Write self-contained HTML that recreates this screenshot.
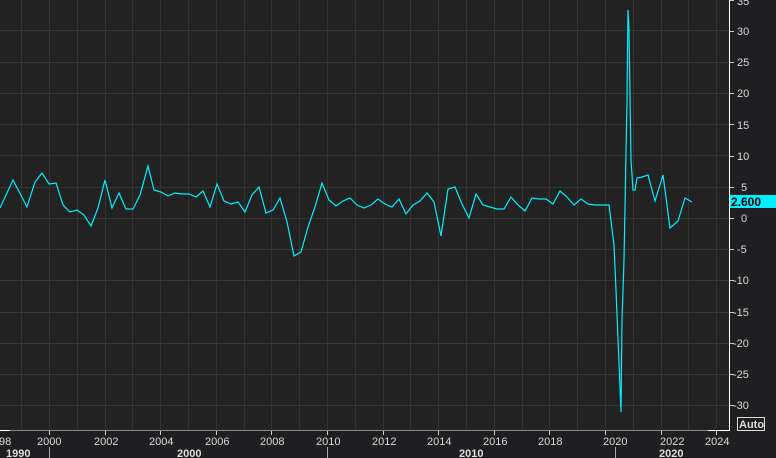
<!DOCTYPE html>
<html><head><meta charset="utf-8"><style>
html,body{margin:0;padding:0;background:#1f1f21;width:776px;height:458px;overflow:hidden}
svg{display:block}
text{font-family:"Liberation Sans",sans-serif;font-size:11px;fill:#d8d8d8}
</style></head><body>
<svg width="776" height="458" xmlns="http://www.w3.org/2000/svg">
<rect x="0" y="0" width="729" height="430" fill="#222222"/>
<g stroke="#343434" stroke-width="1">
<line x1="21.5" y1="0" x2="21.5" y2="430"/><line x1="49.5" y1="0" x2="49.5" y2="430"/><line x1="77.5" y1="0" x2="77.5" y2="430"/><line x1="105.5" y1="0" x2="105.5" y2="430"/><line x1="132.5" y1="0" x2="132.5" y2="430"/><line x1="160.5" y1="0" x2="160.5" y2="430"/><line x1="188.5" y1="0" x2="188.5" y2="430"/><line x1="216.5" y1="0" x2="216.5" y2="430"/><line x1="244.5" y1="0" x2="244.5" y2="430"/><line x1="271.5" y1="0" x2="271.5" y2="430"/><line x1="299.5" y1="0" x2="299.5" y2="430"/><line x1="327.5" y1="0" x2="327.5" y2="430"/><line x1="355.5" y1="0" x2="355.5" y2="430"/><line x1="383.5" y1="0" x2="383.5" y2="430"/><line x1="410.5" y1="0" x2="410.5" y2="430"/><line x1="438.5" y1="0" x2="438.5" y2="430"/><line x1="466.5" y1="0" x2="466.5" y2="430"/><line x1="494.5" y1="0" x2="494.5" y2="430"/><line x1="522.5" y1="0" x2="522.5" y2="430"/><line x1="549.5" y1="0" x2="549.5" y2="430"/><line x1="577.5" y1="0" x2="577.5" y2="430"/><line x1="605.5" y1="0" x2="605.5" y2="430"/><line x1="633.5" y1="0" x2="633.5" y2="430"/><line x1="661.5" y1="0" x2="661.5" y2="430"/><line x1="688.5" y1="0" x2="688.5" y2="430"/><line x1="716.5" y1="0" x2="716.5" y2="430"/>
<line x1="0" y1="30.5" x2="729" y2="30.5"/><line x1="0" y1="62.5" x2="729" y2="62.5"/><line x1="0" y1="93.5" x2="729" y2="93.5"/><line x1="0" y1="124.5" x2="729" y2="124.5"/><line x1="0" y1="155.5" x2="729" y2="155.5"/><line x1="0" y1="187.5" x2="729" y2="187.5"/><line x1="0" y1="218.5" x2="729" y2="218.5"/><line x1="0" y1="249.5" x2="729" y2="249.5"/><line x1="0" y1="280.5" x2="729" y2="280.5"/><line x1="0" y1="312.5" x2="729" y2="312.5"/><line x1="0" y1="343.5" x2="729" y2="343.5"/><line x1="0" y1="374.5" x2="729" y2="374.5"/><line x1="0" y1="405.5" x2="729" y2="405.5"/>
</g>
<polyline fill="none" stroke="#00f0ff" stroke-width="1.2" points="0,208 13,180 27,207 35,182 42,173 49,184 56,183 63,205 70,212 77,210 84,215 91,226 98,208 105,180 112,208 119,193 126,209 133,209 140,195 148,166 154,190 161,192 168,196 175,193 182,194 189,194 196,197 203,191 210,207 217,184 224,201 231,204 238,202 245,212 252,195 259,187 266,213 273,210 280,198 287,222 294,256 301,252 308,227 315,207 322,183 329,200 336,206 343,201 350,198 357,205 364,208 371,205 378,199 385,204 392,207 399,199 406,214 413,205 420,201 427,193 434,202 441,236 448,189 455,187 462,204 469,218 476,194 483,205 490,207 497,209 504,209 511,197 518,205 525,211 532,198 539,199 546,199 553,204 560,191 567,197 574,205 581,199 588,204 595,205 602,205 609,205 614,245 616,290 621,412 622,320 624,260 627,100 628,10 629,30 631,160 633,190 635,190 637,178 642,177 648,175 655,201 663,175 670,228 678,221 685,198 692,202"/>
<line x1="0" y1="430.5" x2="729" y2="430.5" stroke="#8a8a8a"/>
<line x1="0" y1="430.5" x2="10" y2="430.5" stroke="#fff"/>
<line x1="708" y1="430.5" x2="729" y2="430.5" stroke="#fff"/>
<line x1="729.5" y1="0" x2="729.5" y2="431" stroke="#fff"/>
<g stroke="#ccc"><line x1="730" y1="0.5" x2="734" y2="0.5"/><line x1="730" y1="31.5" x2="734" y2="31.5"/><line x1="730" y1="62.5" x2="734" y2="62.5"/><line x1="730" y1="93.5" x2="734" y2="93.5"/><line x1="730" y1="124.5" x2="734" y2="124.5"/><line x1="730" y1="156.5" x2="734" y2="156.5"/><line x1="730" y1="187.5" x2="734" y2="187.5"/><line x1="730" y1="218.5" x2="734" y2="218.5"/><line x1="730" y1="249.5" x2="734" y2="249.5"/><line x1="730" y1="280.5" x2="734" y2="280.5"/><line x1="730" y1="312.5" x2="734" y2="312.5"/><line x1="730" y1="343.5" x2="734" y2="343.5"/><line x1="730" y1="374.5" x2="734" y2="374.5"/><line x1="730" y1="405.5" x2="734" y2="405.5"/></g>
<g>
<text x="737" y="5">35</text><text x="737" y="35">30</text><text x="737" y="66">25</text><text x="737" y="97">20</text><text x="737" y="129">15</text><text x="737" y="160">10</text><text x="741" y="191">5</text><text x="741" y="222">0</text><text x="737" y="253">-5</text><text x="733" y="284">-10</text><text x="733" y="316">-15</text><text x="733" y="347">-20</text><text x="733" y="378">-25</text><text x="733" y="409">-30</text>
</g>
<rect x="730" y="195" width="46" height="13" fill="#00f0ff"/>
<text x="731" y="206" style="font-weight:bold;font-size:12px;fill:#000">2.600</text>
<rect x="737.5" y="417.5" width="27" height="13" fill="none" stroke="#ddd"/>
<text x="739" y="428" style="font-weight:bold;fill:#ddd">Auto</text>
<g stroke="#ccc"><line x1="49.5" y1="431" x2="49.5" y2="435"/><line x1="105.5" y1="431" x2="105.5" y2="435"/><line x1="160.5" y1="431" x2="160.5" y2="435"/><line x1="216.5" y1="431" x2="216.5" y2="435"/><line x1="271.5" y1="431" x2="271.5" y2="435"/><line x1="327.5" y1="431" x2="327.5" y2="435"/><line x1="383.5" y1="431" x2="383.5" y2="435"/><line x1="438.5" y1="431" x2="438.5" y2="435"/><line x1="494.5" y1="431" x2="494.5" y2="435"/><line x1="549.5" y1="431" x2="549.5" y2="435"/><line x1="605.5" y1="431" x2="605.5" y2="435"/><line x1="661.5" y1="431" x2="661.5" y2="435"/><line x1="716.5" y1="431" x2="716.5" y2="435"/></g>
<g stroke="#aaa"><line x1="49.5" y1="447" x2="49.5" y2="458"/><line x1="327.5" y1="447" x2="327.5" y2="458"/><line x1="615.5" y1="447" x2="615.5" y2="458"/></g>
<g>
<text x="-1" y="445">98</text><text x="37" y="445">2000</text><text x="94" y="445">2002</text><text x="149" y="445">2004</text><text x="205" y="445">2006</text><text x="260" y="445">2008</text><text x="316" y="445">2010</text><text x="372" y="445">2012</text><text x="427" y="445">2014</text><text x="483" y="445">2016</text><text x="538" y="445">2018</text><text x="603" y="445">2020</text><text x="660" y="445">2022</text><text x="705" y="445">2024</text>
</g>
<g style="font-weight:bold">
<text x="6" y="457" style="font-weight:bold;fill:#ddd">1990</text><text x="177" y="457" style="font-weight:bold;fill:#ddd">2000</text><text x="459" y="457" style="font-weight:bold;fill:#ddd">2010</text><text x="659" y="457" style="font-weight:bold;fill:#ddd">2020</text>
</g>
</svg>
</body></html>
